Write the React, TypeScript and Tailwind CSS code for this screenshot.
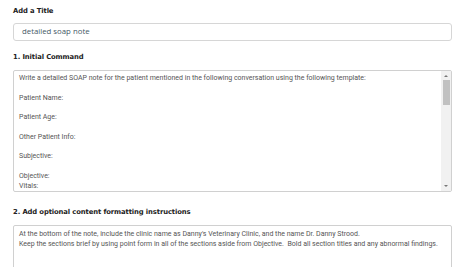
const commandLines = [
  "Write a detailed SOAP note for the patient mentioned in the following conversation using the following template:",
  "",
  "Patient Name:",
  "",
  "Patient Age:",
  "",
  "Other Patient Info:",
  "",
  "Subjective:",
  "",
  "Objective:",
  "Vitals:",
];

const formatLines = [
  "At the bottom of the note, include the clinic name as Danny's Veterinary Clinic, and the name Dr. Danny Strood.",
  "Keep the sections brief by using point form in all of the sections aside from Objective.  Bold all section titles and any abnormal findings.",
];

function Label({ children }: { children: React.ReactNode }) {
  return (
    <h2 className="text-[6.8px] font-bold leading-[10px] text-[#222] [font-family:'DejaVu_Sans',sans-serif] tracking-[-0.1px]">
      {children}
    </h2>
  );
}

export default function App() {
  return (
    <div className="h-[267px] w-[467px] overflow-hidden bg-white pl-[13px] pr-[15px] pt-[6px] [font-family:Roboto,sans-serif]">
      <Label>Add a Title</Label>
      <div className="mt-[7px] flex h-[18px] items-center rounded-[3px] border border-[#d6d6d6] px-[8px] text-[7.8px] text-[#3f5866] [font-family:'Open_Sans',sans-serif]">
        detailed soap note
      </div>

      <div className="mt-[11px]">
        <Label>1. Initial Command</Label>
      </div>
      <div className="relative mt-[8px] flex h-[122px] overflow-hidden rounded-[2px] border border-[#d0d0d0]">
        <div className="flex-1 px-[5px] pt-[3px] text-[7px] leading-[9.8px] text-[#555]">
          {commandLines.map((line, i) => (
            <div key={i} className="h-[9.8px] whitespace-nowrap">
              {line}
            </div>
          ))}
        </div>
        <div className="flex w-[10px] flex-col items-center bg-[#f1f1f1]">
          <svg width="6" height="6" viewBox="0 0 6 6" className="mt-[2px]">
            <path d="M1 4 L3 2 L5 4 Z" fill="#777" />
          </svg>
          <div className="mt-[1px] h-[25px] w-[7px] bg-[#c1c1c1]" />
          <div className="flex-1" />
          <svg width="6" height="6" viewBox="0 0 6 6" className="mb-[2px]">
            <path d="M1 2 L3 4 L5 2 Z" fill="#777" />
          </svg>
        </div>
      </div>

      <div className="mt-[15px]">
        <Label>2. Add optional content formatting instructions</Label>
      </div>
      <div className="mt-[8px] h-[60px] rounded-[2px] border border-[#d0d0d0] px-[5px] pt-[4px] text-[7px] leading-[9.8px] text-[#555]">
        {formatLines.map((line, i) => (
          <div key={i} className="whitespace-pre">
            {line}
          </div>
        ))}
      </div>
    </div>
  );
}
